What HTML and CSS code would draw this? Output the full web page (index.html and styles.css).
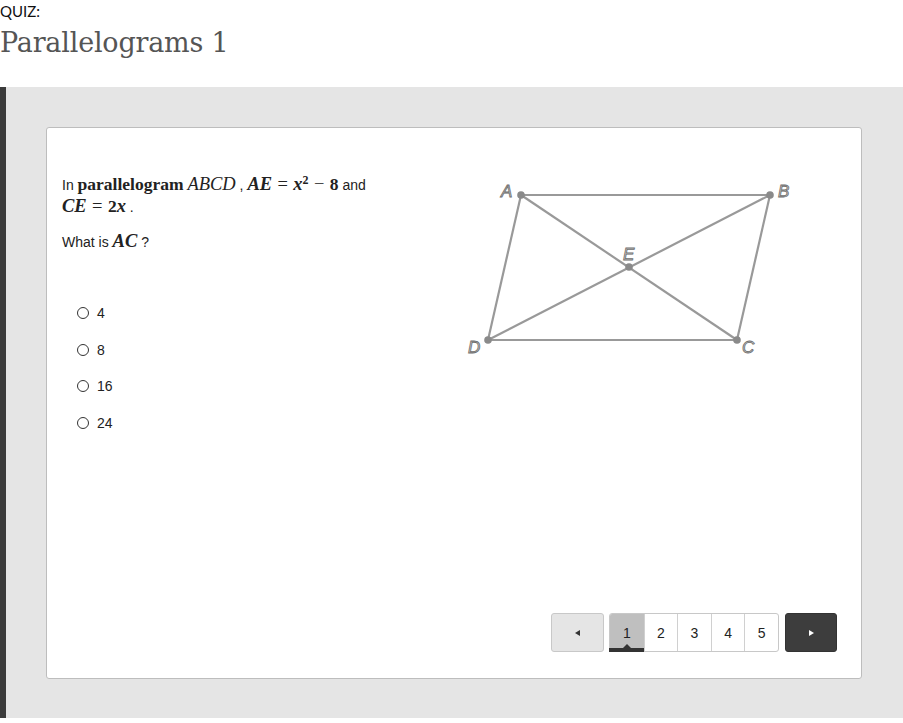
FILE: index.html
```html
<!DOCTYPE html>
<html>
<head>
<meta charset="utf-8">
<link rel="stylesheet" href="styles.css">
</head>
<body>
<header class="header">
  <div class="kicker">QUIZ:</div>
  <h1 class="title">Parallelograms 1</h1>
</header>
<main class="stage">
  <section class="card">
    <div class="content">
      <div class="question">
        <p class="prompt">In <span class="mbf">parallelogram</span> <span class="mi">ABCD</span> , <span class="mbi">AE</span> <span class="mo">=</span> <span class="mbi">x</span><sup class="sup">2</sup> <span class="mo">&minus;</span> <span class="mb">8</span> and<br><span class="mbi">CE</span> <span class="mo">=</span> <span class="mb">2</span><span class="mbi">x</span> .</p>
        <p class="prompt ask">What is <span class="mbi">AC</span> ?</p>
        <ul class="options">
          <li class="option"><span class="radio"></span>4</li>
          <li class="option"><span class="radio"></span>8</li>
          <li class="option"><span class="radio"></span>16</li>
          <li class="option"><span class="radio"></span>24</li>
        </ul>
      </div>
      <svg class="diagram" width="340" height="190" viewBox="0 0 340 190">
        <g stroke="#999" stroke-width="2.2" fill="none">
          <line x1="61" y1="21" x2="310" y2="21"/>
          <line x1="310" y1="21" x2="277" y2="166"/>
          <line x1="277" y1="166" x2="28" y2="166"/>
          <line x1="28" y1="166" x2="61" y2="21"/>
          <line x1="61" y1="21" x2="277" y2="166"/>
          <line x1="310" y1="21" x2="28" y2="166"/>
        </g>
        <g fill="#8a8a8a">
          <circle cx="61" cy="21" r="3.8"/>
          <circle cx="310" cy="21" r="3.8"/>
          <circle cx="277" cy="166" r="3.8"/>
          <circle cx="28" cy="166" r="3.8"/>
          <circle cx="169" cy="93" r="3.8"/>
        </g>
        <g class="lbl">
          <text x="41" y="23">A</text>
          <text x="318" y="23">B</text>
          <text x="163" y="86">E</text>
          <text x="8" y="179">D</text>
          <text x="282" y="179">C</text>
        </g>
      </svg>
    </div>
    <nav class="pager">
      <button class="nav prev"><span class="tri-left"></span></button>
      <div class="pages">
        <span class="page active">1</span>
        <span class="page">2</span>
        <span class="page">3</span>
        <span class="page">4</span>
        <span class="page">5</span>
      </div>
      <button class="nav next"><span class="tri-right"></span></button>
    </nav>
  </section>
</main>
</body>
</html>
```
FILE: styles.css
```css
html, body {
  margin: 0;
  padding: 0;
  background: #ffffff;
}
body {
  width: 903px;
  height: 723px;
  overflow: hidden;
  font-family: "Liberation Sans", Arial, sans-serif;
  color: #222;
}
.header {
  height: 87px;
  box-sizing: border-box;
  padding-top: 2px;
}
.kicker {
  font-family: Lato, "Liberation Sans", sans-serif;
  font-size: 15px;
  line-height: 18px;
  color: #111;
}
.title {
  margin: 5px 0 0 0;
  font-family: "DejaVu Serif", serif;
  font-weight: normal;
  font-size: 27px;
  line-height: 36px;
  color: #555;
  letter-spacing: -0.2px;
}
.stage {
  height: 631px;
  box-sizing: border-box;
  background: #e5e5e5;
  border-left: 6px solid #3b3b3b;
  padding: 40px 41px 39px 40px;
}
.card {
  height: 100%;
  box-sizing: border-box;
  background: #fff;
  border: 1px solid #bdbdbd;
  border-radius: 3px;
  display: flex;
  flex-direction: column;
  padding: 46px 24px 26px 15px;
}
.content {
  display: flex;
  align-items: flex-start;
}
.question {
  width: 398px;
}
.prompt {
  margin: 0;
  font-size: 14px;
  line-height: 21px;
  color: #222;
}
.ask {
  margin-top: 13px;
}
.mbf, .mb {
  font-family: "Liberation Serif", serif;
  font-weight: bold;
  font-size: 17.5px;
}
.mi {
  font-family: "Liberation Serif", serif;
  font-style: italic;
  font-size: 18.5px;
}
.mbi {
  font-family: "Liberation Serif", serif;
  font-style: italic;
  font-weight: bold;
  font-size: 18.5px;
}
.mo {
  font-family: "Liberation Serif", serif;
  font-size: 18.5px;
  padding: 0 1.5px;
}
.sup {
  font-family: "Liberation Serif", serif;
  font-weight: bold;
  font-size: 12px;
  line-height: 0;
}
.options {
  list-style: none;
  margin: 42px 0 0 0;
  padding: 0 0 0 15px;
}
.option {
  display: flex;
  align-items: center;
  height: 36.5px;
  font-size: 14px;
  color: #222;
}
.radio {
  width: 10px;
  height: 10px;
  border: 1.5px solid #333;
  border-radius: 50%;
  margin-right: 8px;
}
.diagram {
  display: block;
}
.lbl text {
  font-family: "Liberation Sans", sans-serif;
  font-style: italic;
  font-size: 17px;
  fill: #c8c8c8;
  stroke: #6e6e6e;
  stroke-width: 0.8px;
}
.pager {
  margin-top: auto;
  display: flex;
  justify-content: flex-end;
  align-items: stretch;
  height: 39px;
}
.nav {
  width: 53px;
  height: 39px;
  border-radius: 3px;
  border: 1px solid #c8c8c8;
  padding: 0;
  display: flex;
  align-items: center;
  justify-content: center;
}
.prev {
  background: #e5e5e5;
}
.next {
  background: #3d3d3d;
  border-color: #333;
  margin-left: 6px;
  width: 52px;
}
.tri-left {
  width: 0;
  height: 0;
  border-top: 3.5px solid transparent;
  border-bottom: 3.5px solid transparent;
  border-right: 5px solid #333;
}
.tri-right {
  width: 0;
  height: 0;
  border-top: 3.5px solid transparent;
  border-bottom: 3.5px solid transparent;
  border-left: 5px solid #fff;
}
.pages {
  display: flex;
  margin-left: 5px;
  border: 1px solid #c8c8c8;
  border-radius: 3px;
}
.page {
  position: relative;
  width: 33.6px;
  display: flex;
  align-items: center;
  justify-content: center;
  font-size: 14px;
  color: #222;
  border-left: 1px solid #d0d0d0;
  box-sizing: border-box;
}
.page:first-child {
  border-left: none;
}
.page.active {
  background: #bfbfbf;
  border-radius: 2px 0 0 0;
}
.page.active::after {
  content: "";
  position: absolute;
  left: -1px;
  right: 0;
  bottom: -1px;
  height: 4px;
  background: #333;
}
.page.active::before {
  content: "";
  position: absolute;
  left: 50%;
  margin-left: -4px;
  bottom: 3px;
  width: 0;
  height: 0;
  border-left: 4px solid transparent;
  border-right: 4px solid transparent;
  border-bottom: 4px solid #333;
}
```
